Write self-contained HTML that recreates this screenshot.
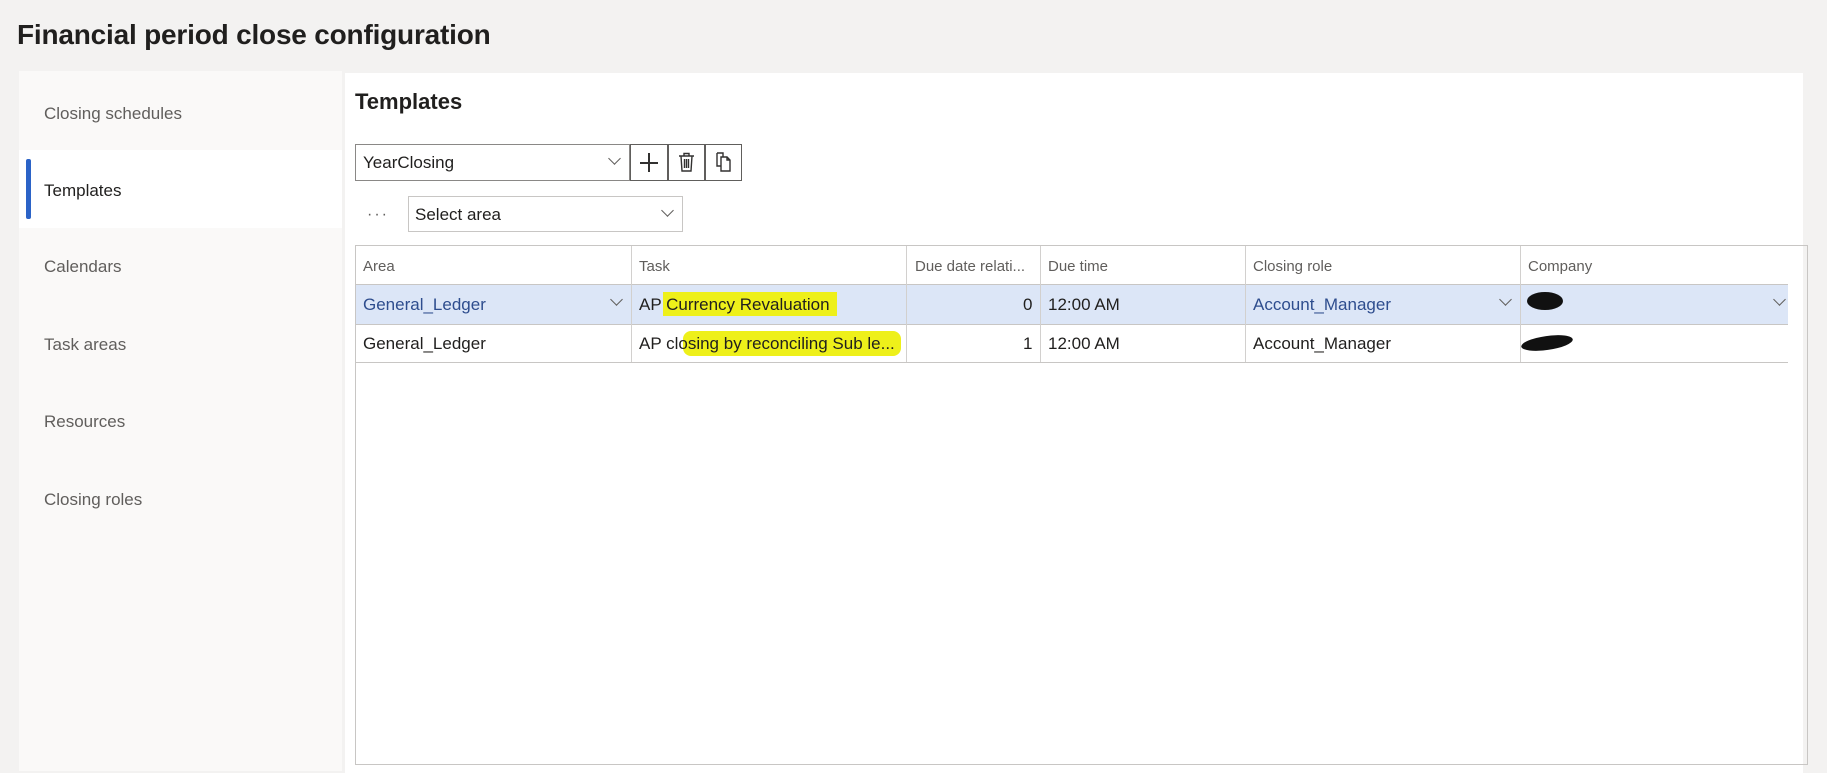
<!DOCTYPE html>
<html><head><style>
*{box-sizing:border-box;margin:0;padding:0}
body{width:1827px;height:757px;background:#f3f2f1;font-family:"Liberation Sans",sans-serif;color:#201f1e;position:relative;overflow:hidden}
.abs{position:absolute}
.nav{position:absolute;left:19px;width:323px;top:71px;height:700px;background:#faf9f8}
.nav div{position:absolute;left:25px;font-size:17px;color:#605e5c}
.main{position:absolute;left:345px;top:73px;width:1458px;height:700px;background:#fff}
.box{position:absolute;border:1px solid #8a8886;background:#fff}
.chev{position:absolute;width:9px;height:9px;border-right:1.3px solid #605e5c;border-bottom:1.3px solid #605e5c;transform:rotate(45deg)}
.cell{position:absolute;font-size:17px;white-space:nowrap}
.hd{position:absolute;font-size:15px;color:#605e5c;top:258px}
.vl{position:absolute;width:1px;background:#d2d0ce;top:246px;height:116px}
.hl{position:absolute;height:1px;background:#c8c6c4;left:356px;width:1432px}
</style></head><body>
<div class="abs" style="left:17px;top:19px;font-size:28px;font-weight:bold;color:#201f1e;letter-spacing:-0.2px">Financial period close configuration</div>
<div class="nav">
<div style="top:33px">Closing schedules</div>
<div style="left:0;top:79px;width:323px;height:78px;background:#fff"></div>
<div style="left:7px;top:88px;width:5px;height:60px;background:#2b63c7;border-radius:2px"></div>
<div style="top:110px;color:#201f1e">Templates</div>
<div style="top:186px">Calendars</div>
<div style="top:264px">Task areas</div>
<div style="top:341px">Resources</div>
<div style="top:419px">Closing roles</div>
</div>
<div class="main"></div>
<div class="abs" style="left:355px;top:89px;font-size:22px;font-weight:bold;color:#201f1e">Templates</div>
<div class="box" style="left:355px;top:144px;width:275px;height:37px"></div>
<div class="cell" style="left:363px;top:153px">YearClosing</div>
<div class="chev" style="left:610px;top:154px"></div>
<div class="box" style="left:630px;top:144px;width:38px;height:37px;border-color:#605e5c"></div>
<div class="abs" style="left:640px;top:162px;width:18px;height:1.5px;background:#323130"></div>
<div class="abs" style="left:648px;top:153px;width:1.5px;height:19px;background:#323130"></div>
<div class="box" style="left:668px;top:144px;width:37px;height:37px;border-color:#605e5c"></div>
<svg class="abs" style="left:678px;top:152px" width="17" height="20" viewBox="0 0 17 20" fill="none" stroke="#323130" stroke-width="1.4"><path d="M1 4h15M6 4V1.5h5V4M3 4l1 15h9l1-15M6.5 7v9M8.5 7v9M10.5 7v9"/></svg>
<div class="box" style="left:705px;top:144px;width:37px;height:37px;border-color:#605e5c"></div>
<svg class="abs" style="left:715px;top:152px" width="17" height="20" viewBox="0 0 17 20" fill="none" stroke="#323130" stroke-width="1.4"><path d="M2 1h6v4M2 1v13h4M6 5h6l3 3v11H6zM12 5v3h3"/></svg>
<div class="abs" style="left:367px;top:206px;font-size:16px;color:#605e5c;letter-spacing:2px">···</div>
<div class="box" style="left:408px;top:196px;width:275px;height:36px;border-color:#c8c6c4"></div>
<div class="cell" style="left:415px;top:205px">Select area</div>
<div class="chev" style="left:663px;top:206px"></div>
<div class="abs" style="left:355px;top:245px;width:1453px;height:520px;border:1px solid #c8c6c4"></div>
<div class="abs" style="left:356px;top:284px;width:1432px;height:40px;background:#dce6f7"></div>
<div class="hl" style="top:284px"></div><div class="hl" style="top:324px"></div><div class="hl" style="top:362px"></div>
<div class="vl" style="left:631px"></div><div class="vl" style="left:906px"></div><div class="vl" style="left:1040px"></div><div class="vl" style="left:1245px"></div><div class="vl" style="left:1520px"></div>
<div class="hd" style="left:363px">Area</div>
<div class="hd" style="left:639px">Task</div>
<div class="hd" style="left:915px">Due date relati...</div>
<div class="hd" style="left:1048px">Due time</div>
<div class="hd" style="left:1253px">Closing role</div>
<div class="hd" style="left:1528px">Company</div>
<div class="cell" style="left:363px;top:295px;color:#2e4d8e">General_Ledger</div>
<div class="chev" style="left:612px;top:295px"></div>
<div class="abs" style="left:663px;top:292px;width:174px;height:24px;background:#eef01a"></div>
<div class="cell" style="left:639px;top:295px">AP Currency Revaluation</div>
<div class="cell" style="left:1023px;top:295px">0</div>
<div class="cell" style="left:1048px;top:295px">12:00 AM</div>
<div class="cell" style="left:1253px;top:295px;color:#2e4d8e">Account_Manager</div>
<div class="chev" style="left:1501px;top:295px"></div>
<div class="abs" style="left:1527px;top:292px;width:36px;height:18px;background:#111;border-radius:50%"></div>
<div class="chev" style="left:1775px;top:295px"></div>
<div class="cell" style="left:363px;top:334px">General_Ledger</div>
<div class="abs" style="left:683px;top:331px;width:218px;height:25px;background:#eef01a;border-radius:8px"></div>
<div class="cell" style="left:639px;top:334px">AP closing by reconciling Sub le...</div>
<div class="cell" style="left:1023px;top:334px">1</div>
<div class="cell" style="left:1048px;top:334px">12:00 AM</div>
<div class="cell" style="left:1253px;top:334px">Account_Manager</div>
<div class="abs" style="left:1521px;top:336px;width:52px;height:14px;background:#111;border-radius:50%;transform:rotate(-8deg)"></div>
</body></html>
